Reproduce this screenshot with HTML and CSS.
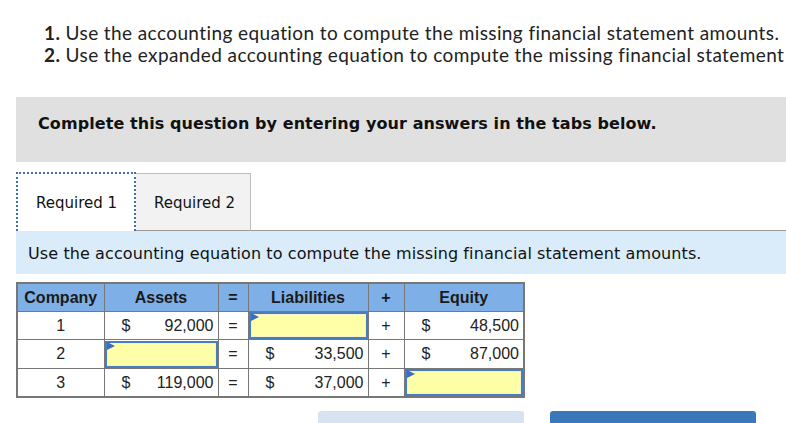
FILE: index.html
```html
<!DOCTYPE html>
<html>
<head>
<meta charset="utf-8">
<link rel="stylesheet" href="styles.css">
</head>
<body>
<div class="page">
  <div class="intro">
    <div class="line"><b>1.</b> Use the accounting equation to compute the missing financial statement amounts.</div>
    <div class="line"><b>2.</b> Use the expanded accounting equation to compute the missing financial statement amounts.</div>
  </div>
  <div class="notice">Complete this question by entering your answers in the tabs below.</div>
  <div class="tabs">
    <div class="tab active">Required 1</div>
    <div class="tab">Required 2</div>
    <div class="tab-rest"></div>
  </div>
  <div class="instruction">Use the accounting equation to compute the missing financial statement amounts.</div>
  <table class="grid">
    <colgroup>
      <col class="c1"><col class="c2"><col class="c3"><col class="c4"><col class="c5"><col class="c6">
    </colgroup>
    <thead>
      <tr><th>Company</th><th>Assets</th><th>=</th><th>Liabilities</th><th>+</th><th>Equity</th></tr>
    </thead>
    <tbody>
      <tr>
        <td class="ctr">1</td>
        <td><div class="amt"><span>$</span><span>92,000</span></div></td>
        <td class="ctr">=</td>
        <td class="incell"><div class="input"><span class="flag"></span></div></td>
        <td class="ctr">+</td>
        <td><div class="amt"><span>$</span><span>48,500</span></div></td>
      </tr>
      <tr>
        <td class="ctr">2</td>
        <td class="incell"><div class="input"><span class="flag"></span></div></td>
        <td class="ctr">=</td>
        <td><div class="amt"><span>$</span><span>33,500</span></div></td>
        <td class="ctr">+</td>
        <td><div class="amt"><span>$</span><span>87,000</span></div></td>
      </tr>
      <tr>
        <td class="ctr">3</td>
        <td><div class="amt"><span>$</span><span>119,000</span></div></td>
        <td class="ctr">=</td>
        <td><div class="amt"><span>$</span><span>37,000</span></div></td>
        <td class="ctr">+</td>
        <td class="incell"><div class="input"><span class="flag"></span></div></td>
      </tr>
    </tbody>
  </table>
  <div class="buttons">
    <div class="btn btn-prev"></div>
    <div class="btn btn-next"></div>
  </div>
</div>
</body>
</html>
```
FILE: styles.css
```css
html, body {
  margin: 0;
  padding: 0;
  background: #ffffff;
  overflow: hidden;
}
.page {
  width: 786px;
  height: 423px;
  overflow: hidden;
  white-space: nowrap;
}
.intro {
  padding: 22px 0 0 44px;
  font-family: Lato, "Open Sans", sans-serif;
  font-size: 19px;
  letter-spacing: 0.4px;
  line-height: 22px;
  color: #222;
}
.intro b {
  font-weight: 700;
}
.notice {
  margin: 31px 0 0 16px;
  height: 65px;
  box-sizing: border-box;
  padding: 17px 0 0 22px;
  background: #e0e0e0;
  font-family: Verdana, "DejaVu Sans", sans-serif;
  font-weight: bold;
  font-size: 16px;
  letter-spacing: 0.08px;
  line-height: 20px;
  color: #111;
}
.tabs {
  display: flex;
  margin: 10px 0 0 16px;
  height: 59px;
  font-family: Verdana, "DejaVu Sans", sans-serif;
  font-size: 15px;
  color: #111;
}
.tab {
  box-sizing: border-box;
  padding: 2px 15px 0 18px;
  display: flex;
  align-items: center;
  background: #f2f2f2;
  border: 1px solid #bdbdbd;
  border-left: none;
  border-bottom: 1px solid #9a9a9a;
  margin-top: 1px;
  height: 58px;
}
.tab.active {
  background: #ffffff;
  border: 2px dotted #3d6fb3;
  border-bottom: none;
  margin-top: 0;
  height: 59px;
  width: 120px;
  padding: 0 0 0 18px;
}
.tab-rest {
  flex: 1;
  border-bottom: 1px solid #9a9a9a;
}
.instruction {
  margin-left: 16px;
  height: 43px;
  box-sizing: border-box;
  padding: 13px 0 0 12px;
  background: #daecf9;
  font-family: Verdana, "DejaVu Sans", sans-serif;
  font-size: 16px;
  letter-spacing: 0.1px;
  line-height: 19px;
  color: #111;
}
.grid {
  margin: 8px 0 0 16px;
  border-collapse: collapse;
  table-layout: fixed;
  width: 507px;
  font-family: Arial, "Liberation Sans", sans-serif;
  font-size: 16px;
  color: #222;
  border: 2px solid #777;
}
.grid .c1 { width: 87px; }
.grid .c2 { width: 114px; }
.grid .c3 { width: 30px; }
.grid .c4 { width: 120px; }
.grid .c5 { width: 36px; }
.grid .c6 { width: 120px; }
.grid th {
  background: #7eb0e7;
  height: 27px;
  font-weight: bold;
  text-align: center;
  border: 1px solid #777;
  padding: 0;
  color: #1a1a1a;
}
.grid td {
  height: 27px;
  border: 1px solid #777;
  padding: 0;
}
.grid td.ctr {
  text-align: center;
}
.grid tbody tr:nth-child(2) td { height: 28px; }
.amt {
  display: flex;
  justify-content: space-between;
  padding: 0 4px 0 17px;
}
.incell {
  padding: 0;
}
.input {
  position: relative;
  box-sizing: border-box;
  height: 27px;
  background: #ffffa8;
  border: 2px solid #4a7dbf;
  box-shadow: inset 0 0 0 1px #f4f4c8;
}
.flag {
  position: absolute;
  left: 0;
  top: 0;
  width: 0;
  height: 0;
  border-top: 4px solid transparent;
  border-bottom: 4px solid transparent;
  border-left: 8px solid #3a6fbf;
  margin-top: -1px;
}
.buttons {
  display: flex;
  margin: 13px 0 0 318px;
  gap: 26px;
}
.btn {
  width: 206px;
  height: 30px;
  border-radius: 3px 3px 0 0;
}
.btn-prev {
  background: #d7e3f1;
}
.btn-next {
  background: #3a78b9;
}
```
